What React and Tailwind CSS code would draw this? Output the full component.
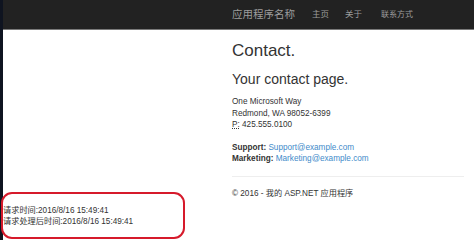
export default function App() {
  const font = { fontFamily: '"Liberation Sans", Arial, "Noto Sans CJK SC", sans-serif' };
  return (
    <div className="relative flex h-[240px] w-[474px] overflow-hidden bg-white text-[#333]" style={font}>
      <div className="w-[3px] shrink-0 bg-[#0f1420]" />
      <div className="flex min-w-0 flex-1 flex-col">
        <nav className="flex h-[30px] shrink-0 items-center border-b border-[#7a7a7a] bg-[#222] pl-[229px] text-[#9d9d9d]">
          <span className="text-[10.5px] leading-none">应用程序名称</span>
          <span className="ml-[17px] text-[8.5px] leading-none">主页</span>
          <span className="ml-[16px] text-[8.5px] leading-none">关于</span>
          <span className="ml-[19px] text-[8px] leading-none">联系方式</span>
        </nav>

        <main className="pl-[229px]">
          <h1 className="mt-[10px] text-[17px] leading-[22px]">Contact.</h1>
          <h3 className="mt-[8px] text-[14px] leading-[18px]">Your contact page.</h3>
          <address className="mt-[8px] text-[8.2px] not-italic leading-[11.5px]">
            One Microsoft Way<br />
            Redmond, WA 98052-6399<br />
            <abbr title="Phone" className="underline decoration-dotted">P:</abbr> 425.555.0100
          </address>
          <address className="mt-[11px] text-[8.2px] not-italic leading-[11.5px]">
            <strong>Support:</strong> <a className="text-[#428bca]">Support@example.com</a><br />
            <strong>Marketing:</strong> <a className="text-[#428bca]">Marketing@example.com</a>
          </address>
          <hr className="mt-[11px] mr-[10px] border-[#eee]" />
          <footer className="mt-[11px] text-[8.2px] leading-[11px]">© 2016 - 我的 ASP.NET 应用程序</footer>
        </main>

        <div className="mt-[6px] text-[8.2px] leading-[11px]">
          <div>请求时间:2016/8/16 15:49:41</div>
          <div>请求处理后时间:2016/8/16 15:49:41</div>
        </div>
      </div>

      <div className="pointer-events-none absolute left-[1px] top-[192px] h-[47px] w-[184px] rounded-[11px] border-2 border-[#d61a2b]" />
    </div>
  );
}
